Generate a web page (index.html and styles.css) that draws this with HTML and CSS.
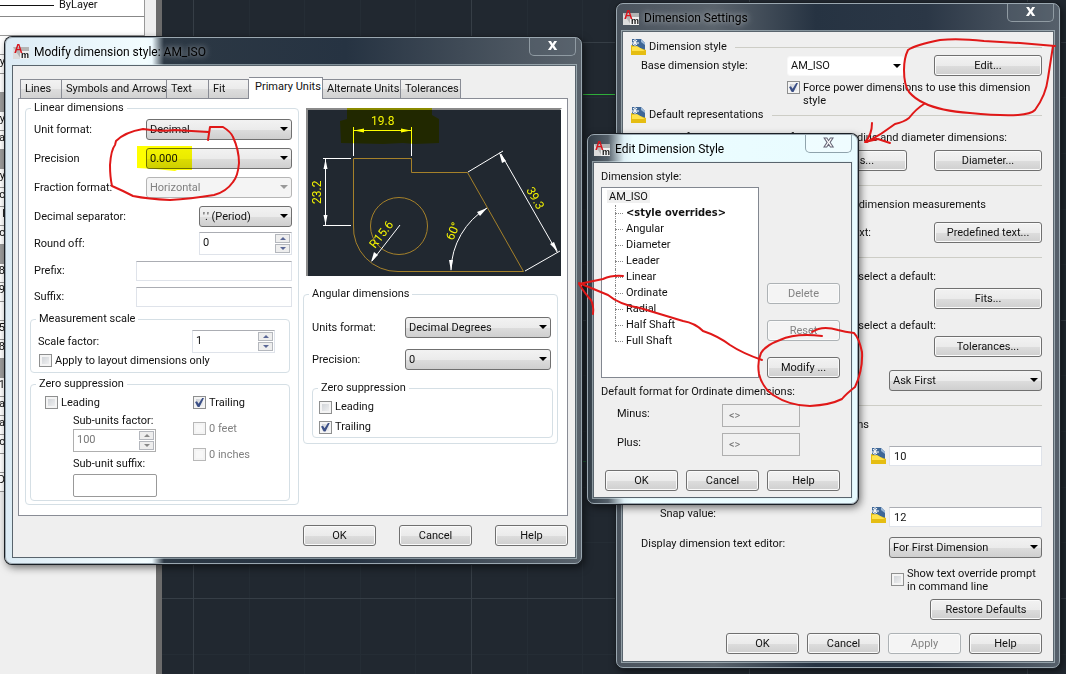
FILE: index.html
```
<!DOCTYPE html>
<html lang="en">
<head>
  <meta charset="UTF-8">
  <meta name="viewport" content="width=device-width, initial-scale=1.0">
  <title>Dimension Settings</title>
  <link rel="stylesheet" href="styles.css">
</head>
<body>

  <!-- Shared icons -->
  <svg class="defs" width="0" height="0">
    <symbol id="app-icon" viewBox="0 0 16 16">
      <path d="M0 3h16v12H0z" fill="#b4b4b4"/>
      <path d="M0 3l8 12H0z" fill="#dcdcdc"/>
      <path d="M7 7h9v8H7z" fill="#f0f0f0"/>
      <text x="1" y="9" font-size="12" font-weight="bold" fill="#d8141c">A</text>
      <text x="8" y="14" font-size="9" font-weight="bold" fill="#111">m</text>
    </symbol>
    <symbol id="dwg-icon" viewBox="0 0 15 16">
      <path d="M1 0h9l4 4v8H1z" fill="#3f6797"/>
      <path d="M10 0l4 4v2l-4-3z" fill="#9bb8d8"/>
      <path d="M0 6l15 5v5H0z" fill="#e5bd12"/>
      <path d="M1 8l5-1 8 5H1z" fill="#ffe24a"/>
      <path d="M4 0v7M1 4h7M2 1l4 5M6 1L2 6" stroke="#fff" stroke-width="1"/>
    </symbol>
  </svg>

  <div class="desktop">

    <!-- Drawing grid -->
    <svg class="grid-lines" width="100%" height="100%">
      <path class="minor" d="M249.500 0v2000M304.500 0v2000M360.500 0v2000M415.500 0v2000M527.500 0v2000M582.500 0v2000M1082.500 0v2000M160 97.500h2000M160 153.500h2000M160 209.500h2000M160 264.500h2000M160 375.500h2000M160 431.500h2000M160 487.500h2000M160 542.500h2000M160 654.500h2000"/>
      <path class="major" d="M193.500 0v2000M471.500 0v2000M749.500 0v2000M1027.500 0v2000M160 42.500h2000M160 320.500h2000M160 598.500h2000"/>
      <path class="axis" d="M580 94.500h40"/>
      <path class="axis dim" d="M580 461.500h40"/>
    </svg>

    <!-- Properties palette -->
    <div class="palette">
      <div class="palette-line"><i></i><span>ByLayer</span></div>
      <div class="palette-row"></div>
      <div class="palette-row"></div>
      <div class="palette-row"><span>y</span></div>
      <div class="palette-row"></div>
      <div class="palette-row head"></div>
      <div class="palette-row"><span>y</span></div>
      <div class="palette-row"><span>a</span></div>
      <div class="palette-row head"></div>
      <div class="palette-row"><span>y</span></div>
      <div class="palette-row"><span>c</span></div>
      <div class="palette-row"><span>l</span></div>
      <div class="palette-row"><span>c</span></div>
      <div class="palette-row head"></div>
      <div class="palette-row"><span>8</span></div>
      <div class="palette-row"><span>9</span></div>
      <div class="palette-row"></div>
      <div class="palette-row"><span>5</span></div>
      <div class="palette-row"><span>8</span></div>
      <div class="palette-row head"></div>
      <div class="palette-row"><span>1</span></div>
      <div class="palette-row"><span>a</span></div>
      <div class="palette-row"><span>a</span></div>
      <div class="palette-row"><span>c</span></div>
      <div class="palette-row"></div>
      <div class="palette-row"><span>D</span></div>
    </div>

    <!-- Dimension Settings -->
    <div class="window settings">
      <div class="titlebar">
        <svg class="logo" width="16" height="16"><use href="#app-icon"/></svg>
        <span class="title">Dimension Settings</span>
        <button class="close" aria-label="Close">x</button>
      </div>
      <div class="client">
        <div class="section">
          <svg width="15" height="16"><use href="#dwg-icon"/></svg>
          <span>Dimension style</span>
          <hr>
        </div>
        <div class="line base-row">
          <label for="base">Base dimension style:</label>
          <div class="combo flat"><select id="base"><option>AM_ISO</option></select></div>
          <button class="btn wide">Edit...</button>
        </div>
        <label class="check two-line force"><input type="checkbox" checked><span>Force power dimensions to use this dimension style</span></label>
        <div class="section second">
          <svg width="15" height="16"><use href="#dwg-icon"/></svg>
          <span>Default representations</span>
          <hr>
        </div>
        <p class="note note-rep">Select default representations for angular, radius and diameter dimensions:</p>
        <div class="line rep-buttons">
          <button class="btn wide">Radius...</button>
          <button class="btn wide">Diameter...</button>
        </div>
        <hr class="rule">
        <p class="note note-meas">Select default text for dimension measurements</p>
        <div class="line pair">
          <span class="note-text">Predefined text:</span>
          <button class="btn wide">Predefined text...</button>
        </div>
        <hr class="rule">
        <p class="note note-default">Fits, select a default:</p>
        <div class="line end"><button class="btn wide">Fits...</button></div>
        <p class="note note-default tol">Tolerances, select a default:</p>
        <div class="line end"><button class="btn wide">Tolerances...</button></div>
        <div class="line end ask">
          <div class="combo"><select aria-label="Update"><option>Ask First</option></select></div>
        </div>
        <hr class="rule">
        <p class="note note-opt">Distance options for dimensions</p>
        <div class="line end dist">
          <svg width="15" height="16"><use href="#dwg-icon"/></svg>
          <input class="edit" type="text" value="10" aria-label="Distance">
        </div>
        <div class="line snap">
          <label for="snap">Snap value:</label>
          <svg width="15" height="16"><use href="#dwg-icon"/></svg>
          <input class="edit" id="snap" type="text" value="12">
        </div>
        <div class="line editor">
          <label for="editor">Display dimension text editor:</label>
          <div class="combo"><select id="editor"><option>For First Dimension</option></select></div>
        </div>
        <label class="check two-line prompt"><input type="checkbox"><span>Show text override prompt in command line</span></label>
        <div class="line end restore"><button class="btn wide">Restore Defaults</button></div>
        <div class="buttons">
          <button class="btn">OK</button>
          <button class="btn">Cancel</button>
          <button class="btn" disabled>Apply</button>
          <button class="btn">Help</button>
        </div>
      </div>
    </div>

    <!-- Modify dimension style -->
    <div class="window modify">
      <div class="titlebar">
        <svg class="logo" width="16" height="16"><use href="#app-icon"/></svg>
        <span class="title">Modify dimension style: AM_ISO</span>
        <button class="close" aria-label="Close">x</button>
      </div>
      <div class="client">
        <div class="tabs">
          <button class="tab t-lines">Lines</button>
          <button class="tab t-symbols">Symbols and Arrows</button>
          <button class="tab t-text">Text</button>
          <button class="tab t-fit">Fit</button>
          <button class="tab t-primary active">Primary Units</button>
          <button class="tab t-alt">Alternate Units</button>
          <button class="tab t-tol">Tolerances</button>
        </div>
        <div class="pane">

          <fieldset class="group linear">
            <legend>Linear dimensions</legend>
            <div class="combo-rows">
              <div class="row">
                <label for="unit">Unit format:</label>
                <div class="combo"><select id="unit"><option>Decimal</option></select></div>
              </div>
              <div class="row">
                <label for="prec">Precision</label>
                <div class="combo"><select id="prec"><option>0.000</option></select></div>
              </div>
              <div class="row">
                <label for="frac">Fraction format:</label>
                <div class="combo off"><select id="frac" disabled><option>Horizontal</option></select></div>
              </div>
              <div class="row">
                <label for="sep">Decimal separator:</label>
                <div class="combo short"><select id="sep"><option>'.' (Period)</option></select></div>
              </div>
            </div>
            <div class="edit-rows">
              <div class="row">
                <label for="round">Round off:</label>
                <div class="spin"><input id="round" type="text" value="0"><b class="up"></b><b class="down"></b></div>
              </div>
              <div class="row">
                <label for="prefix">Prefix:</label>
                <input class="edit" id="prefix" type="text">
              </div>
              <div class="row">
                <label for="suffix">Suffix:</label>
                <input class="edit" id="suffix" type="text">
              </div>
            </div>

            <fieldset class="group scale">
              <legend>Measurement scale</legend>
              <div class="row">
                <label for="scale">Scale factor:</label>
                <div class="spin"><input id="scale" type="text" value="1"><b class="up"></b><b class="down"></b></div>
              </div>
              <label class="check"><input type="checkbox"><span>Apply to layout dimensions only</span></label>
            </fieldset>

            <fieldset class="group zero">
              <legend>Zero suppression</legend>
              <div class="zero-left">
                <label class="check"><input type="checkbox"><span>Leading</span></label>
                <label class="sub" for="factor">Sub-units factor:</label>
                <div class="spin off"><input id="factor" type="text" value="100" disabled><b class="up"></b><b class="down"></b></div>
                <label class="sub" for="subsuffix">Sub-unit suffix:</label>
                <input class="edit" id="subsuffix" type="text">
              </div>
              <div class="zero-right">
                <label class="check"><input type="checkbox" checked><span>Trailing</span></label>
                <label class="check off"><input type="checkbox" disabled><span>0 feet</span></label>
                <label class="check off"><input type="checkbox" disabled><span>0 inches</span></label>
              </div>
            </fieldset>
          </fieldset>

          <div class="right">
            <svg class="preview" viewBox="306 108 256 169">
              <path d="M306 108h256v169H306z" fill="#fff"/>
              <path d="M306 108h256l-2 2H308v166h-2z" fill="#8a8a8a"/>
              <path d="M308 110h253v166H308z" fill="#212830"/>
              <g fill="none" stroke="#a5812a">
                <path d="M353.500 158.500h58v14h56L523.500 271.500H398A44 44 0 0 1 353.500 225z"/>
                <circle cx="399" cy="226" r="28.500"/>
              </g>
              <g fill="none" stroke="#fff">
                <path d="M353.500 127v29M411.500 127v29M354 130.500h57"/>
                <path d="M323 158.500h28M323 225.500h28M325.500 159v66"/>
                <path d="M468 172l35-21M525 271l35-20M501 154l56 98"/>
                <path d="M451 270a75 75 0 0 1 36-62"/>
                <path d="M400 225l-28 36"/>
              </g>
              <g fill="#fff">
                <path d="M354 130.500l10-2v4zM411 130.500l-10-2v4z"/>
                <path d="M325.500 159l-2 10h4zM325.500 225l-2-10h4z"/>
                <path d="M499 152l7 9-4 2zM558 252l-8-8 4-2z"/>
                <path d="M487 208l-10 4 3 4zM451 271l-2-11h4z"/>
                <path d="M371 262l3-10 4 3z"/>
              </g>
              <g class="dims">
                <text x="371" y="125">19.8</text>
                <text transform="translate(321 204) rotate(-90)">23.2</text>
                <text transform="translate(526 190) rotate(60)">39.3</text>
                <text transform="translate(375 249) rotate(-52)">R15.6</text>
                <text transform="translate(453 241) rotate(-66)">60°</text>
              </g>
            </svg>

            <fieldset class="group angular">
              <legend>Angular dimensions</legend>
              <div class="row">
                <label for="aunit">Units format:</label>
                <div class="combo"><select id="aunit"><option>Decimal Degrees</option></select></div>
              </div>
              <div class="row">
                <label for="aprec">Precision:</label>
                <div class="combo"><select id="aprec"><option>0</option></select></div>
              </div>
              <fieldset class="group azero">
                <legend>Zero suppression</legend>
                <label class="check"><input type="checkbox"><span>Leading</span></label>
                <label class="check"><input type="checkbox" checked><span>Trailing</span></label>
              </fieldset>
            </fieldset>
          </div>
        </div>
        <div class="buttons">
          <button class="btn">OK</button>
          <button class="btn">Cancel</button>
          <button class="btn">Help</button>
        </div>
      </div>
    </div>

    <!-- Edit Dimension Style -->
    <div class="window edit-style">
      <div class="titlebar">
        <svg class="logo" width="16" height="16"><use href="#app-icon"/></svg>
        <span class="title">Edit Dimension Style</span>
        <button class="close light" aria-label="Close">x</button>
      </div>
      <div class="client">
        <p class="caption">Dimension style:</p>
        <div class="tree-area">
          <div class="tree">
            <span class="root">AM_ISO</span>
            <ul>
              <li><b>&lt;style overrides&gt;</b></li>
              <li>Angular</li>
              <li>Diameter</li>
              <li>Leader</li>
              <li>Linear</li>
              <li>Ordinate</li>
              <li>Radial</li>
              <li>Half Shaft</li>
              <li>Full Shaft</li>
            </ul>
          </div>
          <div class="tree-buttons">
            <button class="btn" disabled>Delete</button>
            <button class="btn" disabled>Reset</button>
            <button class="btn">Modify ...</button>
          </div>
        </div>
        <p class="caption ordinate">Default format for Ordinate dimensions:</p>
        <div class="row">
          <label for="minus">Minus:</label>
          <input class="edit" id="minus" type="text" value="&lt;&gt;" disabled>
        </div>
        <div class="row">
          <label for="plus">Plus:</label>
          <input class="edit" id="plus" type="text" value="&lt;&gt;" disabled>
        </div>
        <div class="buttons">
          <button class="btn">OK</button>
          <button class="btn">Cancel</button>
          <button class="btn">Help</button>
        </div>
      </div>
    </div>

    <!-- Highlighter -->
    <svg class="marker" width="1066" height="674">
      <path d="M137 146h55v24h-15l-2 1-20-2-18-1z"/>
      <path d="M347 108h85v7l7 4v24l-24 1-12-1-20 1-42-1-1-22 7-2z"/>
    </svg>

    <!-- Red pen -->
    <svg class="pen" width="1066" height="674">
      <path d="M208 140L210 127 223 127Q231 132 233 137 239 150 239 163 238 176 233 182 226 192 214 195 190 199 170 200 148 199 133 196L123 191 112 186Q110 177 110 165 111 150 115 145L116 141Q125 132 143 129 160 132 175 130L208 132"/>
      <path d="M1055 46L1020 43 984 41Q958 38 940 40 915 45 908 50 904 58 904 70 904 85 909 92 915 99 924 103 940 111 970 113 1000 116 1018 115 1031 114 1035 110 1046 95 1048 78L1053 46"/>
      <path d="M924 104Q916 109 909 118 904 122 895 124 882 134 867 142M872 123Q872 135 865 142L878 139 890 143"/>
      <path d="M822 336Q795 333 780 340 766 345 761 353 757 362 759 374 762 387 773 395 790 406 810 406 830 405 842 399 846 394 855 387 863 370 862 352 859 338 854 333 845 332 838 330 822 325 812 332"/>
      <path d="M762 360Q742 353 730 345 718 336 703 331 695 323 683 321 660 314 640 308 620 305 608 295L579 283M623 276Q612 275 603 279L579 284Q586 295 591 300 594 306 593 314"/>
    </svg>
  </div>
</body>
</html>
```
FILE: styles.css
```
* {
  box-sizing: border-box;
}

body {
  margin: 0;
  font-family: Roboto, "Open Sans", sans-serif;
  font-size: 11px;
  line-height: 14px;
  color: #111;
}

p, ul {
  margin: 0;
  padding: 0;
}

button, input, select {
  font-family: inherit;
  font-size: inherit;
  line-height: inherit;
  color: inherit;
  margin: 0;
}

.defs {
  position: absolute;
}

.defs text {
  font-family: "Liberation Sans", sans-serif;
}

/* Desktop */
.desktop {
  position: relative;
  height: 100vh;
  overflow: hidden;
  background: #212830;
}

.grid-lines,
.marker,
.pen {
  position: absolute;
  top: 0;
  left: 0;
}

.minor {
  stroke: #252d35;
}

.major {
  stroke: #363e46;
}

.axis {
  stroke: #2fae3a;
}

.axis.dim {
  stroke: #1d5a33;
}

/* Palette */
.palette {
  position: relative;
  width: 162px;
  height: 100%;
  background: #efefef;
  border-right: 6px solid #6b6b6b;
}

.palette-line {
  display: flex;
  align-items: center;
  width: 145px;
  height: 17px;
  padding-bottom: 6px;
  background: #fff;
  border-right: 1px solid #999;
  border-bottom: 1px solid #888;
}

.palette-line i {
  width: 54px;
  height: 1px;
  margin-right: 5px;
  background: #111;
}

.palette-row {
  display: flex;
  justify-content: flex-end;
  width: 145px;
  height: 19px;
  padding-right: 139px;
  background: #fff;
  border-right: 1px solid #999;
  border-bottom: 1px solid #999;
}

.palette-row.head {
  background: #9c9c9c;
}

/* Windows */
.window {
  position: absolute;
  padding: 0 5px 5px;
  border: 1px solid #9aa7b0;
  border-radius: 7px;
  box-shadow: 0 0 0 1px #1a1f25, 2px 3px 8px rgba(0, 0, 0, 0.6);
  background: #27333f;
}

.titlebar {
  display: flex;
  align-items: center;
  height: 27px;
  padding-left: 1px;
  font-size: 12px;
}

.logo {
  margin-right: 5px;
}

.title {
  flex: 1;
  color: #000;
  text-shadow: 0 0 5px rgba(255, 255, 255, 0.5), 0 0 10px rgba(255, 255, 255, 0.4);
}

.close {
  align-self: flex-start;
  width: 47px;
  height: 18px;
  padding: 0 0 3px;
  border: 1px solid #909ba3;
  border-top: 0;
  border-radius: 0 0 5px 5px;
  background: rgba(90, 100, 112, 0.35);
  color: #fff;
  font-family: "DejaVu Sans", sans-serif;
  font-size: 15px;
  font-weight: bold;
}

.close.light {
  background: rgba(255, 255, 255, 0.3);
  border-color: #8fa3ac;
  -webkit-text-stroke: 1px #667;
}

.client {
  background: #efefef;
  border: 1px solid #59646d;
  outline: 1px solid rgba(220, 235, 240, 0.5);
}

.settings {
  left: 616px;
  top: 3px;
  width: 444px;
  background: linear-gradient(to right, #4b545e, #5a636c 22%, #263342 45%, #2b3746 70%, #56606b);
}

.modify {
  left: 5px;
  top: 37px;
  width: 577px;
  padding-left: 6px;
  background: linear-gradient(to right, #dcebf5, #f3fdff 140px, #eefaff 146px, #2c3844 158px, #263342 340px, #5a636c);
}

.edit-style {
  left: 587px;
  top: 134px;
  width: 271px;
  background: linear-gradient(to right, #333e48, #55606a 20px, #dff0f6 36px, #ecfdff 45px, #e8fbff);
}

/* Controls */
.btn {
  width: 73px;
  height: 21px;
  padding: 0;
  border: 1px solid #707070;
  border-radius: 3px;
  background: linear-gradient(#f2f2f2, #ebebeb 50%, #dddddd 51%, #cfcfcf);
  box-shadow: inset 0 0 0 1px #fafafa;
  text-align: center;
}

.btn.wide {
  width: 108px;
}

.btn:disabled {
  border-color: #adb2b5;
  background: #f4f4f4;
  color: #838383;
}

.combo {
  position: relative;
  width: 146px;
  height: 21px;
}

.combo select {
  width: 100%;
  height: 100%;
  padding: 0 16px 0 3px;
  border: 1px solid #707070;
  border-radius: 3px;
  background: linear-gradient(#f2f2f2, #ebebeb 50%, #dddddd 51%, #cfcfcf);
  appearance: none;
}

.combo::after {
  content: "";
  position: absolute;
  right: 4px;
  top: 8px;
  border: 4px solid transparent;
  border-top-color: #000;
  border-bottom: 0;
}

.combo.short {
  width: 93px;
}

.combo.off select {
  border-color: #b5b5b5;
  background: #f4f4f4;
  color: #808080;
  opacity: 1;
}

.combo.off::after {
  border-top-color: #999;
}

.combo.flat {
  width: 118px;
  height: 20px;
}

.combo.flat select {
  border-color: #f8f8f8;
  background: #fff;
}

.edit {
  height: 20px;
  padding: 0 4px;
  border: 1px solid #dfe3ea;
  border-top-color: #abadb3;
  background: #fff;
}

.edit:disabled {
  border: 1px solid #afafaf;
  background: #f0f0f0;
  color: #777;
}

.spin {
  display: grid;
  grid-template-columns: 1fr 15px;
  grid-template-rows: 9px 9px;
  gap: 1px 0;
  width: 93px;
  height: 23px;
  padding: 1px;
  border: 1px solid #dfe3ea;
  border-top-color: #abadb3;
  background: #fff;
}

.spin input {
  grid-row: 1 / 3;
  width: 100%;
  min-width: 0;
  padding: 0 2px 2px;
  border: 0;
  background: #fff;
}

.spin b {
  display: grid;
  place-items: center;
  border: 1px solid #b4b7bd;
  background: #eeeeee;
}

.spin b::before {
  content: "";
  border: 3px solid transparent;
}

.spin .up::before {
  border-top: 0;
  border-bottom-color: #5a6796;
}

.spin .down::before {
  border-bottom: 0;
  border-top-color: #5a6796;
}

.spin.off {
  border-color: #afafaf;
  color: #777;
}

.spin.off .up::before {
  border-bottom-color: #888;
}

.spin.off .down::before {
  border-top-color: #888;
}

.check {
  display: flex;
  align-items: center;
  gap: 3px;
  height: 13px;
  white-space: nowrap;
}

.check input {
  flex: none;
  width: 13px;
  height: 13px;
  border: 1px solid #8e8f8f;
  background: linear-gradient(135deg, #c9cdd2, #f6f6f6);
  box-shadow: inset 0 0 0 2px #f4f4f4;
  appearance: none;
}

.check input:checked::before {
  content: "";
  display: block;
  width: 9px;
  height: 9px;
  margin: 1px;
  background: #3b4f86;
  clip-path: polygon(0 45%, 22% 35%, 40% 65%, 80% 0, 100% 0, 50% 100%, 30% 100%);
}

.check.off {
  color: #808080;
}

.check.off input {
  border-color: #b8b8b8;
  background: #f8f8f8;
}

.two-line {
  align-items: flex-start;
  height: 26px;
  line-height: 13px;
  white-space: normal;
}

.row {
  display: flex;
  align-items: center;
  justify-content: space-between;
}

.line {
  display: flex;
  align-items: center;
}

.end {
  justify-content: flex-end;
}

.buttons {
  display: flex;
  justify-content: flex-end;
  gap: 8px;
}

.group {
  min-width: 0;
  margin: 0;
  border: 1px solid #d5dfe5;
  border-radius: 4px;
}

.group legend {
  height: 14px;
  padding: 0 3px;
}

/* Modify dimension style */
.modify .client {
  padding: 11px 7px 11px 5px;
}

.tabs {
  display: flex;
  align-items: flex-end;
  padding-left: 2px;
}

.tab {
  height: 19px;
  padding: 0 4px;
  border: 1px solid #898c95;
  border-left-width: 0;
  border-bottom: 0;
  background: linear-gradient(#f2f2f2, #ebebeb 50%, #dddddd 51%, #d2d2d2);
  text-align: left;
  white-space: nowrap;
}

.tab.active {
  height: 22px;
  margin-bottom: -1px;
  padding: 0 6px 4px;
  background: #fff;
  z-index: 1;
}

.t-lines {
  width: 42px;
  border-left-width: 1px;
}

.t-symbols {
  width: 105px;
}

.t-text {
  width: 42px;
}

.t-fit {
  width: 40px;
}

.t-primary {
  width: 74px;
}

.t-alt {
  width: 78px;
}

.t-tol {
  width: 60px;
}

.pane {
  display: flex;
  align-items: flex-start;
  justify-content: space-between;
  padding: 2px 5px 10px 6px;
  border: 1px solid #898c95;
  background: #fff;
}

.linear {
  width: 274px;
  padding: 4px 6px 3px 4px;
}

.linear > legend {
  margin-left: 1px;
}

.combo-rows {
  display: grid;
  gap: 8px;
  padding-left: 4px;
}

.edit-rows {
  display: grid;
  gap: 6px;
  margin-top: 5px;
  padding-left: 4px;
}

.edit-rows .edit {
  width: 156px;
}

.scale {
  width: 260px;
  margin-top: 5px;
  padding: 4px 14px 5px 7px;
}

.scale .spin,
.zero .spin {
  width: 83px;
}

.scale .check {
  margin-top: 1px;
  padding-left: 1px;
}

.zero {
  display: flex;
  justify-content: space-between;
  width: 260px;
  margin-top: 4px;
  padding: 5px 0 3px 14px;
}

.scale legend {
  margin-left: -2px;
}

.zero legend {
  margin-left: -9px;
}

.zero-left {
  display: grid;
  justify-items: start;
}

.zero-left .sub {
  margin: 5px 0 1px 28px;
}

.zero-left .spin {
  margin-left: 28px;
}

.zero-left .edit {
  width: 84px;
  height: 23px;
  margin: 2px 0 0 28px;
  border-color: #999;
  border-radius: 2px;
}

.zero-right {
  display: grid;
  align-content: start;
  gap: 13px;
  width: 96px;
}

.right {
  display: flex;
  flex-direction: column;
  width: 260px;
  padding-top: 7px;
}

.preview {
  width: 256px;
  height: 169px;
  margin-left: 4px;
}

.dims {
  fill: #f4f400;
  font-size: 12px;
}

.angular {
  width: 255px;
  margin: 10px 0 0 1px;
  padding: 16px 4px 5px 8px;
}

.angular > legend {
  margin-left: -3px;
}

.angular > .row {
  margin-bottom: 11px;
  padding-right: 2px;
}

.azero {
  padding: 2px 6px 0;
}

.azero .check {
  height: 20px;
}

.azero legend {
  margin-left: -1px;
}

.modify .buttons {
  gap: 23px;
  margin-top: 9px;
}

/* Edit Dimension Style */
.edit-style .client {
  padding: 7px 11px 6px 7px;
}

.tree-area {
  display: flex;
  gap: 8px;
  margin-top: 3px;
}

.tree {
  width: 158px;
  height: 191px;
  padding: 1px 5px;
  border: 1px solid #828790;
  background: #fff;
  line-height: 16px;
}

.tree .root {
  padding: 0 2px;
  background: #f0f0f0;
}

.tree ul {
  margin-left: 8px;
  list-style: none;
}

.tree li {
  position: relative;
  height: 16px;
  padding-left: 11px;
}

.tree li::before {
  content: "";
  position: absolute;
  left: 0;
  top: 8px;
  width: 8px;
  border-top: 1px dotted #888;
}

.tree li::after {
  content: "";
  position: absolute;
  left: 0;
  top: 0;
  height: 16px;
  border-left: 1px dotted #888;
}

.tree li:last-child::after {
  height: 8px;
}

.tree b {
  font-family: "DejaVu Sans Condensed", "DejaVu Sans", sans-serif;
}

.tree-buttons {
  display: flex;
  flex-direction: column;
  justify-content: flex-end;
  gap: 16px;
}

.caption.ordinate {
  margin: 7px 0 5px;
}

.edit-style .row {
  height: 29px;
  align-items: flex-start;
  padding: 0 40px 0 16px;
}

.edit-style .row label {
  padding-top: 3px;
}

.edit-style .edit {
  width: 78px;
  height: 23px;
  padding: 0 6px;
}

.edit-style .buttons {
  margin-top: 8px;
}

/* Dimension Settings */
.settings .client {
  padding: 7px 11px 7px 8px;
}

.section {
  display: flex;
  align-items: center;
  gap: 3px;
  height: 16px;
}

.section hr,
.rule {
  height: 1px;
  margin: 0;
  border: 0;
  background: #cdcdc6;
}

.section hr {
  flex: 1;
  margin-left: 5px;
}

.base-row {
  padding-left: 10px;
}

.base-row label {
  width: 146px;
}

.base-row .btn {
  margin-left: auto;
}

.force {
  width: 254px;
  margin: 5px 0 0 156px;
}

.note {
  height: 14px;
  text-align: right;
  white-space: nowrap;
}

.note-rep {
  width: 376px;
  margin: 8px 0 5px;
}

.rep-buttons {
  justify-content: flex-end;
  gap: 27px;
}

.rule {
  margin: 14px 0 12px;
}

.note-meas {
  width: 355px;
  margin-bottom: 10px;
}

.pair {
  justify-content: space-between;
}

.pair .note-text {
  width: 240px;
  text-align: right;
}

.note-default {
  width: 305px;
  margin-bottom: 4px;
}

.note-default.tol {
  margin-top: 10px;
  margin-bottom: 3px;
}

.ask {
  margin-top: 13px;
}

.settings .ask .combo,
.editor .combo {
  width: 153px;
}

.note-opt {
  width: 238px;
}

.dist {
  margin-top: 14px;
}

.dist,
.snap {
  gap: 3px;
}

.settings .edit {
  width: 153px;
}

.snap {
  align-items: flex-start;
  margin-top: 41px;
  padding-left: 29px;
}

.snap label {
  flex: 1;
}

.editor {
  align-items: flex-start;
  justify-content: space-between;
  margin-top: 10px;
  padding-left: 10px;
}

.prompt {
  width: 151px;
  margin: 9px 0 6px auto;
}

.prompt input {
  margin-top: 6px;
}

.restore .btn {
  width: 112px;
}

.settings .buttons {
  margin-top: 13px;
}

/* Annotations */
.marker {
  fill: #ffff00;
  mix-blend-mode: multiply;
  pointer-events: none;
}

.pen {
  fill: none;
  stroke: #e01818;
  stroke-width: 2;
  stroke-linejoin: round;
  stroke-linecap: round;
  pointer-events: none;
}
```
